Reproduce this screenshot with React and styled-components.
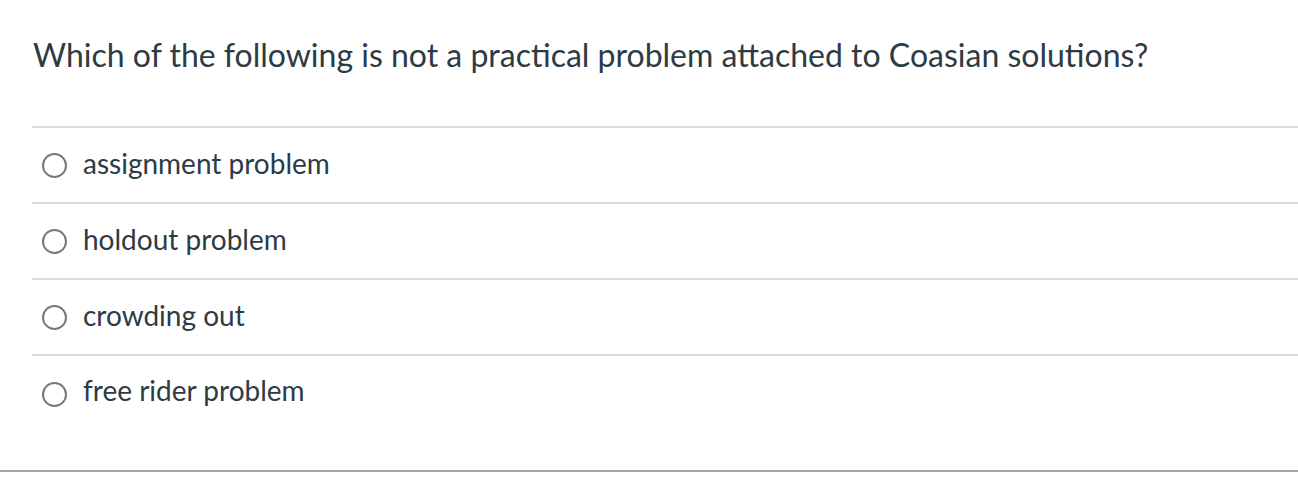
import React from "react";
import styled, { createGlobalStyle } from "styled-components";

const GlobalStyle = createGlobalStyle`
  body {
    margin: 0;
    background: #ffffff;
    font-family: Lato, "Open Sans", sans-serif;
    color: #2d3b45;
  }
`;

const Page = styled.div`
  width: 1298px;
  height: 486px;
  overflow: hidden;
`;

const Question = styled.div`
  height: 126px;
  padding-left: 33px;
  box-sizing: border-box;
  padding-top: 35px;
  font-size: 32px;
  line-height: 40px;
  white-space: nowrap;
`;

const Answers = styled.div`
  margin-left: 32px;
`;

const Answer = styled.label`
  display: flex;
  gap: 16px;
  height: ${(p) => (p.$last ? "116px" : "76px")};
  align-items: ${(p) => (p.$last ? "flex-start" : "center")};
  padding-top: ${(p) => (p.$last ? "16px" : "0")};
  box-sizing: border-box;
  padding-left: 10px;
  border-top: 2px solid #dadada;
  font-size: 28px;
  line-height: 36px;
  cursor: pointer;
`;

const Radio = styled.span`
  width: 21px;
  height: 21px;
  border: 2px solid #777777;
  border-radius: 50%;
  flex: none;
  margin-top: ${(p) => (p.$last ? "10px" : "0")};
`;

const Text = styled.span`
  margin-bottom: ${(p) => (p.$last ? "0" : "4px")};
`;

const Footer = styled.div`
  height: 2px;
  background: #a6a6a6;
`;

const options = [
  "assignment problem",
  "holdout problem",
  "crowding out",
  "free rider problem",
];

export default function App() {
  return (
    <Page>
      <GlobalStyle />
      <Question>
        Which of the following is not a practical problem attached to Coasian solutions?
      </Question>
      <Answers>
        {options.map((o, i) => {
          const last = i === options.length - 1;
          return (
            <Answer key={o} $last={last}>
              <Radio $last={last} />
              <Text $last={last}>{o}</Text>
            </Answer>
          );
        })}
      </Answers>
      <Footer />
    </Page>
  );
}
